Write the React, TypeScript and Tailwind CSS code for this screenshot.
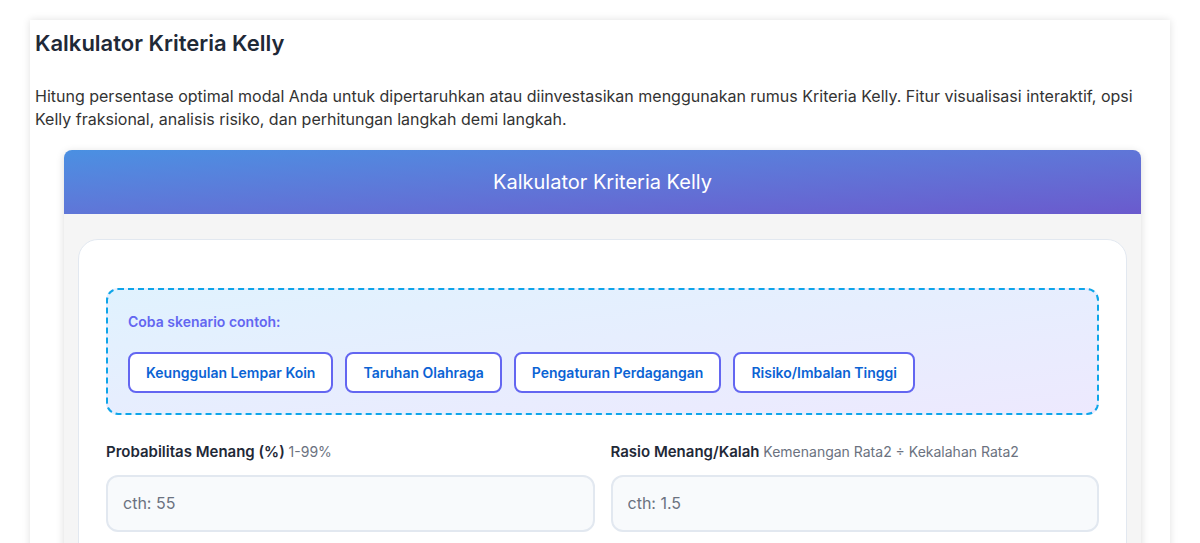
export default function App() {
  const scenarios = ['Keunggulan Lempar Koin', 'Taruhan Olahraga', 'Pengaturan Perdagangan', 'Risiko/Imbalan Tinggi'];
  return (
    <div className="h-[543px] overflow-y-scroll bg-white font-[Inter,sans-serif] text-[#1f2937]">
      <div className="mx-[30px] mt-[20px] mb-10 bg-white pl-[5px] pr-[20px] pt-[8px] pb-40 shadow-[0_0_8px_rgba(0,0,0,0.12)]">
        <h1 className="text-[22px] font-semibold leading-[30px]">Kalkulator Kriteria Kelly</h1>
        <p className="mt-[27px] text-[16px] leading-[23px] text-[#333]">
          Hitung persentase optimal modal Anda untuk dipertaruhkan atau diinvestasikan menggunakan rumus Kriteria Kelly. Fitur visualisasi interaktif, opsi Kelly fraksional, analisis risiko, dan perhitungan langkah demi langkah.
        </p>
        <div className="ml-[29px] mr-[9px] mt-[19px] overflow-hidden rounded-lg bg-[#f5f5f5] shadow-[0_2px_8px_rgba(0,0,0,0.15)]">
          <div className="flex h-[64px] items-center justify-center bg-gradient-to-br from-[#4a90e2] to-[#6a5acd] text-[20px] text-white">
            Kalkulator Kriteria Kelly
          </div>
          <div className="px-[14px] pt-[25px] pb-6">
            <div className="rounded-[20px] border border-[#e2e8f0] bg-white px-[27px] pt-[48px] pb-10">
              <div className="rounded-xl border-2 border-dashed border-[#0ea5e9] bg-gradient-to-br from-[#e0f2fe] to-[#ede9fe] px-[20px] pt-[21px] pb-[20px]">
                <div className="text-[14px] font-semibold text-[#6366f1]">Coba skenario contoh:</div>
                <div className="mt-[20px] flex gap-[12px]">
                  {scenarios.map((s) => (
                    <button key={s} type="button" className="h-[41px] rounded-lg border-2 border-[#6366f1] bg-white px-[16px] text-[14px] font-semibold text-[#0b63d4]">
                      {s}
                    </button>
                  ))}
                </div>
              </div>
              <div className="mt-[26px] grid grid-cols-2 gap-[16px]">
                <div>
                  <div className="text-[15px] font-semibold">
                    Probabilitas Menang (%) <span className="text-[14px] font-normal text-[#6b7280]">1-99%</span>
                  </div>
                  <input placeholder="cth: 55" className="mt-[11px] h-[57px] w-full rounded-xl border-2 border-[#e2e8f0] bg-[#f8fafc] px-[15px] text-[16px] placeholder:text-[#6b7280]" />
                </div>
                <div>
                  <div className="text-[15px] font-semibold">
                    Rasio Menang/Kalah <span className="text-[14px] font-normal text-[#6b7280]">Kemenangan Rata2 ÷ Kekalahan Rata2</span>
                  </div>
                  <input placeholder="cth: 1.5" className="mt-[11px] h-[57px] w-full rounded-xl border-2 border-[#e2e8f0] bg-[#f8fafc] px-[15px] text-[16px] placeholder:text-[#6b7280]" />
                </div>
              </div>
            </div>
          </div>
        </div>
      </div>
    </div>
  );
}
